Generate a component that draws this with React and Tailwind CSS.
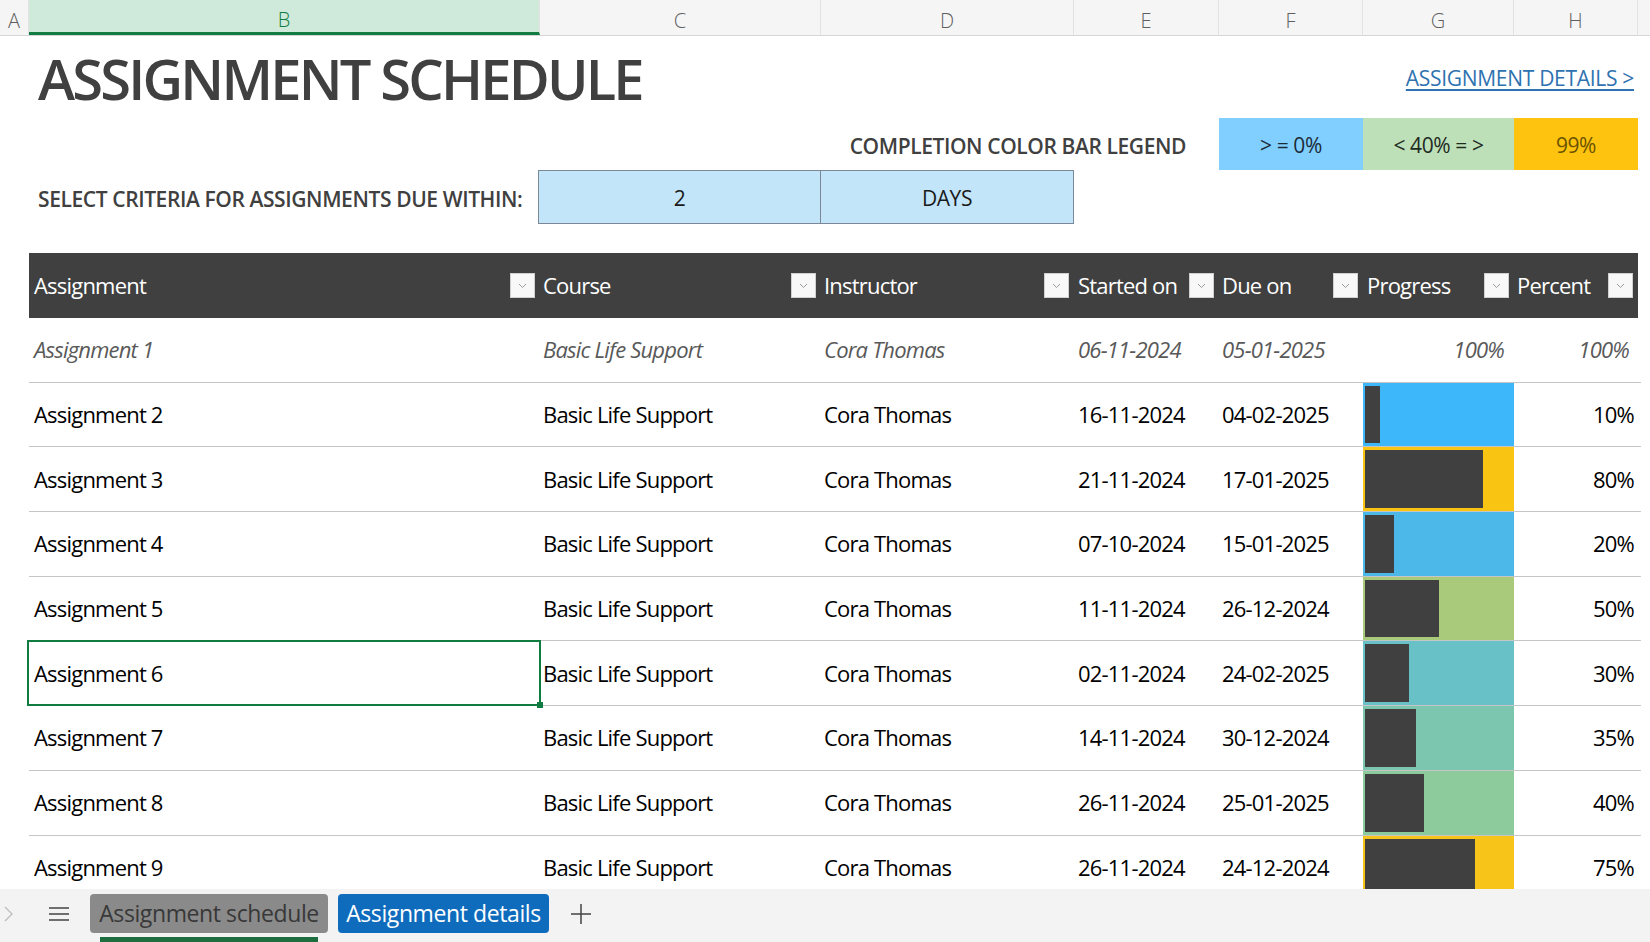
import React from 'react';

const colHeads = [
  { l: 'A', c: 'w-[29px]' },
  { l: 'B', c: 'w-[511px] bg-[#cfeadb] text-[#107c41] border-b-[3px] border-b-[#107c41]' },
  { l: 'C', c: 'w-[281px]' },
  { l: 'D', c: 'w-[253px]' },
  { l: 'E', c: 'w-[145px]' },
  { l: 'F', c: 'w-[144px]' },
  { l: 'G', c: 'w-[151px]' },
  { l: 'H', c: 'w-[124px]' },
];

const rows = [
  { name: 'Assignment 2', start: '16-11-2024', due: '04-02-2025', pct: 10, color: 'bg-[#3db7fa]' },
  { name: 'Assignment 3', start: '21-11-2024', due: '17-01-2025', pct: 80, color: 'bg-[#f9c412]' },
  { name: 'Assignment 4', start: '07-10-2024', due: '15-01-2025', pct: 20, color: 'bg-[#4bb8e9]' },
  { name: 'Assignment 5', start: '11-11-2024', due: '26-12-2024', pct: 50, color: 'bg-[#a9ca7a]' },
  { name: 'Assignment 6', start: '02-11-2024', due: '24-02-2025', pct: 30, color: 'bg-[#68c1c7]', selected: true },
  { name: 'Assignment 7', start: '14-11-2024', due: '30-12-2024', pct: 35, color: 'bg-[#7cc5ae]' },
  { name: 'Assignment 8', start: '26-11-2024', due: '25-01-2025', pct: 40, color: 'bg-[#8dca9c]' },
  { name: 'Assignment 9', start: '26-11-2024', due: '24-12-2024', pct: 75, color: 'bg-[#f7c51a]' },
];

const grid = 'grid grid-cols-[511px_281px_253px_145px_144px_151px_124px]';

function FilterBtn() {
  return (
    <span className="w-[25px] h-[25px] shrink-0 bg-[#f8f8f8] border border-[#d0d0d0] flex items-center justify-center">
      <svg width="9" height="6" viewBox="0 0 9 6">
        <path d="M1 1l3.5 3.5L8 1" stroke="#9b9b9b" strokeWidth="1" fill="none" />
      </svg>
    </span>
  );
}

function HeadCell({ label, pad = 'pl-[4px]' }) {
  return (
    <div className={`flex items-center justify-between pr-[5px] ${pad}`}>
      <span>{label}</span>
      <FilterBtn />
    </div>
  );
}

export default function App() {
  return (
    <div className="w-[1650px] h-[942px] flex flex-col overflow-hidden bg-white text-black font-['Open_Sans',sans-serif]">
      {/* column letters */}
      <div className="h-[36px] shrink-0 flex bg-[#f5f5f5] border-b border-[#d6d6d6] text-[20px] font-light text-[#5f5f5f]">
        {colHeads.map(h => (
          <div key={h.l} className={`h-full flex items-center justify-center pt-[7px] border-r border-[#e2e2e2] ${h.c}`}>{h.l}</div>
        ))}
        <div className="flex-1" />
      </div>

      {/* sheet */}
      <div className="flex-1 overflow-hidden">
        <div className="h-[82px] flex items-center justify-between pl-[38px] pr-[16px]">
          <h1 className="mt-[2px] text-[56px] font-semibold text-[#404040] tracking-[-2.8px]">ASSIGNMENT SCHEDULE</h1>
          <a className="mt-[4px] text-[21px] text-[#2e72b0] tracking-[-0.3px] underline underline-offset-[3px] decoration-[1.5px]">ASSIGNMENT DETAILS &gt;</a>
        </div>

        <div className="h-[52px] flex text-[21px] tracking-[-0.4px]">
          <div className="w-[1219px] flex items-center justify-end pr-[33px] pt-[6px] font-semibold text-[#404040]">
            COMPLETION COLOR BAR LEGEND
          </div>
          <div className="w-[144px] bg-[#80cfff] flex items-center justify-center pt-[3px] text-[#1c2a38]">&gt; = 0%</div>
          <div className="w-[151px] bg-[#bde0b9] flex items-center justify-center pt-[3px] text-[#1f2a1f]">&lt; 40% = &gt;</div>
          <div className="w-[124px] bg-[#fdc30f] flex items-center justify-center pt-[3px] text-[#6b5200]">99%</div>
        </div>

        <div className="h-[54px] flex text-[21px] tracking-[-0.4px]">
          <div className="w-[538px] flex items-center pl-[38px] pt-[5px] font-semibold text-[#404040]">
            SELECT CRITERIA FOR ASSIGNMENTS DUE WITHIN:
          </div>
          <div className="flex border border-[#7b8898] bg-[#c3e5f9] text-[#1a1a1a]">
            <div className="w-[282px] flex items-center justify-center pt-[3px] border-r border-[#7b8898]">2</div>
            <div className="w-[252px] flex items-center justify-center pt-[3px]">DAYS</div>
          </div>
        </div>

        <div className="h-[29px]" />

        <div className="ml-[29px] w-[1612px] text-[22px] tracking-[-0.8px]">
          <div className={`${grid} h-[65px] bg-[#404040] text-white w-[1609px]`}>
            <HeadCell label="Assignment" pad="pl-[5px]" />
            <HeadCell label="Course" pad="pl-[3px]" />
            <HeadCell label="Instructor" pad="pl-[3px]" />
            <HeadCell label="Started on" />
            <HeadCell label="Due on" pad="pl-[3px]" />
            <HeadCell label="Progress" />
            <HeadCell label="Percent" pad="pl-[3px]" />
          </div>

          <div className={`${grid} h-[64.7px] border-b border-[#c6c6c6] italic text-[#595959]`}>
            <div className="flex items-center pl-[5px]">Assignment 1</div>
            <div className="flex items-center pl-[3px]">Basic Life Support</div>
            <div className="flex items-center pl-[3px]">Cora Thomas</div>
            <div className="flex items-center pl-[4px]">06-11-2024</div>
            <div className="flex items-center pl-[3px]">05-01-2025</div>
            <div className="flex items-center justify-end pr-[10px]">100%</div>
            <div className="flex items-center justify-end pr-[9px]">100%</div>
          </div>

          {rows.map(r => (
            <div key={r.name} className={`${grid} h-[64.7px] border-b border-[#c6c6c6]`}>
              <div className="relative flex items-center pl-[5px]">
                {r.name}
                {r.selected && (
                  <div className="absolute -top-[1px] -left-[2px] -right-[1px] -bottom-[1px] border-2 border-[#107c41]">
                    <span className="absolute -right-[4px] -bottom-[4px] w-[6px] h-[6px] bg-[#107c41]" />
                  </div>
                )}
              </div>
              <div className="flex items-center pl-[3px]">Basic Life Support</div>
              <div className="flex items-center pl-[3px]">Cora Thomas</div>
              <div className="flex items-center pl-[4px]">{r.start}</div>
              <div className="flex items-center pl-[3px]">{r.due}</div>
              <div className={`${r.color} pt-[3px] pb-[3px] pl-[2px] pr-[2px]`}>
                <div className="h-full bg-[#404040]" style={{ width: `${r.pct}%` }} />
              </div>
              <div className="flex items-center justify-end pr-[4px]">{r.pct}%</div>
            </div>
          ))}
        </div>
      </div>

      {/* sheet tabs */}
      <div className="h-[53px] shrink-0 flex items-start pt-[5px] bg-[#f3f3f3] text-[23px] tracking-[-0.4px]">
        <div className="w-[49px] h-[39px] flex items-center pl-[4px]">
          <svg width="9" height="16" viewBox="0 0 9 16">
            <path d="M1 1l7 7-7 7" stroke="#bdbdbd" strokeWidth="1.3" fill="none" />
          </svg>
        </div>
        <div className="w-[41px] h-[39px] flex items-center">
          <svg width="20" height="16" viewBox="0 0 20 16">
            <path d="M0 2h20M0 8h20M0 14h20" stroke="#444" strokeWidth="1.6" />
          </svg>
        </div>
        <div className="relative">
          <div className="h-[39px] w-[238px] rounded-[4px] bg-[#8a8a8a] text-[#383838] flex items-center justify-center">Assignment schedule</div>
          <div className="absolute left-[10px] top-[43px] w-[218px] h-[5px] bg-[#1f6e40]" />
        </div>
        <div className="ml-[10px] h-[39px] w-[211px] rounded-[4px] bg-[#0f6cbd] text-white flex items-center justify-center">Assignment details</div>
        <div className="ml-[22px] h-[39px] flex items-center">
          <svg width="20" height="20" viewBox="0 0 20 20">
            <path d="M10 0v20M0 10h20" stroke="#444" strokeWidth="1.5" />
          </svg>
        </div>
      </div>
    </div>
  );
}
